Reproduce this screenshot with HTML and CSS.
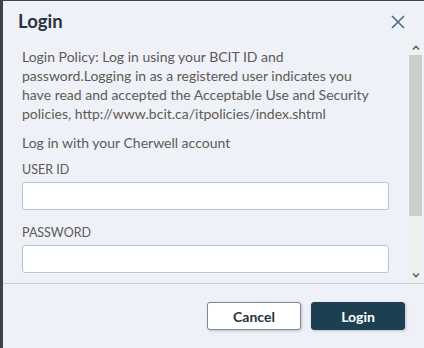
FILE: index.html
```html
<!DOCTYPE html>
<html lang="en">
<head>
    <meta charset="UTF-8">
    <title>Login</title>
    <link rel="stylesheet" href="styles.css">
</head>
<body>

    <div class="dialog">
        <div class="dialog-header">
            <h1>Login</h1>
            <span class="close-btn">
                <svg width="14" height="14" viewBox="0 0 14 14">
                    <path d="M1 1 L13 13 M13 1 L1 13" stroke="#4d6b80" stroke-width="1.6" fill="none"/>
                </svg>
            </span>
        </div>

        <div class="dialog-body">
            <div class="body-content">
                <p class="policy">Login Policy: Log in using your BCIT ID and password.Logging in as a registered user indicates you have read and accepted the Acceptable Use and Security policies, http://www.bcit.ca/itpolicies/index.shtml</p>
                <p class="policy">Log in with your Cherwell account</p>

                <div class="field">
                    <label>USER ID</label>
                    <input type="text">
                </div>
                <div class="field">
                    <label>PASSWORD</label>
                    <input type="password">
                </div>
            </div>

            <!-- scrollbar -->
            <div class="scrollbar">
                <div class="scroll-arrow">
                    <svg width="8" height="5" viewBox="0 0 8 5"><path d="M1 4.5 L4 1.2 L7 4.5" stroke="#555" stroke-width="1.4" fill="none"/></svg>
                </div>
                <div class="scroll-thumb"></div>
                <div class="scroll-track"></div>
                <div class="scroll-arrow">
                    <svg width="8" height="5" viewBox="0 0 8 5"><path d="M1 0.5 L4 3.8 L7 0.5" stroke="#555" stroke-width="1.4" fill="none"/></svg>
                </div>
            </div>
        </div>

        <div class="dialog-footer">
            <button class="btn btn-cancel">Cancel</button>
            <button class="btn btn-login">Login</button>
        </div>
    </div>

</body>
</html>
```

FILE: styles.css
```css
html, body {
    margin: 0;
    padding: 0;
    height: 100%;
}
body {
    font-family: Lato, "Noto Sans", sans-serif;
    background-color: #38434e;
}
.dialog {
    box-sizing: border-box;
    height: 348px;
    margin-left: 3px;
    margin-top: 1px;
    background-color: #eef1f8;
    display: flex;
    flex-direction: column;
}
.dialog-header {
    height: 39px;
    display: flex;
    align-items: center;
    justify-content: space-between;
    padding: 0 19px 0 15px;
}
.dialog-header h1 {
    margin: 0;
    font-size: 18.5px;
    font-weight: bold;
    color: #2b3240;
}
.close-btn {
    display: flex;
    padding-top: 2px;
}
.dialog-body {
    height: 243px;
    display: flex;
    overflow: hidden;
    border-bottom: 1px solid #c6cfdb;
}
.body-content {
    flex: 1;
    padding: 7px 19px 0 19px;
    overflow: hidden;
}
.policy {
    max-width: 358px;
    margin: 0 0 10px 0;
    font-size: 14px;
    line-height: 19px;
    color: #5f5a55;
}
.field {
    margin-top: 10px;
}
.field label {
    display: block;
    font-size: 12.5px;
    line-height: 16px;
    color: #5f5a55;
    margin-bottom: 4px;
}
.field input {
    display: block;
    box-sizing: border-box;
    width: 367px;
    height: 28px;
    border: 1px solid #b8c4d2;
    border-radius: 3px;
    background: #fff;
    margin-bottom: 15px;
}
.scrollbar {
    width: 13px;
    margin-right: 2px;
    display: flex;
    flex-direction: column;
    background-color: #f0f0f0;
}
.scroll-arrow {
    height: 15px;
    display: flex;
    align-items: center;
    justify-content: center;
}
.scroll-thumb {
    height: 161px;
    background-color: #cdcdcd;
}
.scroll-track {
    flex: 1;
}
.dialog-footer {
    flex: 1;
    display: flex;
    justify-content: flex-end;
    align-items: flex-start;
    gap: 10px;
    padding: 18px 19px 0 0;
}
.btn {
    width: 94px;
    height: 28px;
    font-family: Lato, "Noto Sans", sans-serif;
    font-size: 14px;
    font-weight: bold;
    border-radius: 3px;
    cursor: pointer;
    box-shadow: 1px 1px 3px rgba(0, 0, 0, 0.2);
}
.btn-cancel {
    background-color: #fff;
    color: #24303c;
    border: 1px solid #7c8a96;
}
.btn-login {
    background-color: #1c3f52;
    color: #fff;
    border: 1px solid #1c3f52;
}
```
